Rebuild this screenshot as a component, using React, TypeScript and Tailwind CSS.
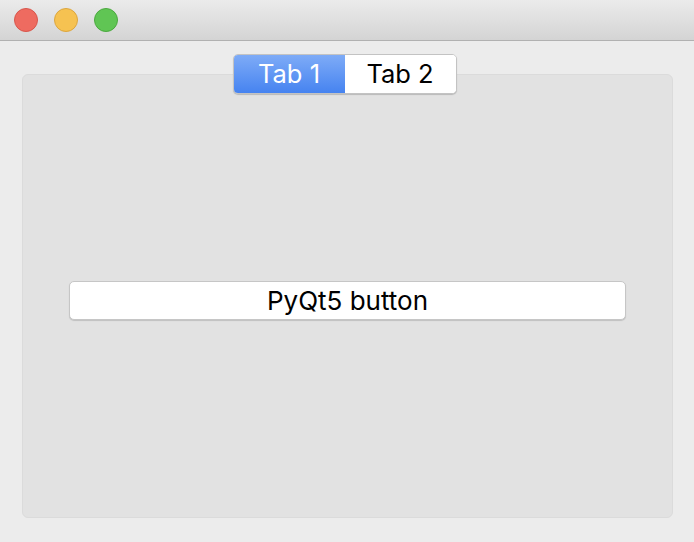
import React, { useState } from 'react'

const TrafficLight: React.FC<{ fill: string }> = ({ fill }) => (
  <span className={`block w-[24px] h-[24px] rounded-full border ${fill}`} />
)

export default function App() {
  const [tab, setTab] = useState(0)

  return (
    <div
      className="w-[694px] h-[542px] flex flex-col bg-[#ececec] overflow-hidden"
      style={{ fontFamily: 'Inter, "Liberation Sans", Arial, sans-serif' }}
    >
      {/* title bar */}
      <div className="h-[41px] shrink-0 flex items-center gap-[16px] pl-[14px] bg-gradient-to-b from-[#ebebeb] to-[#d4d4d4] border-b border-[#b1b1b1]">
        <TrafficLight fill="bg-[#ee6b60] border-[#d8564c]" />
        <TrafficLight fill="bg-[#f6c251] border-[#dca63f]" />
        <TrafficLight fill="bg-[#60c554] border-[#4ba93f]" />
      </div>

      <div className="flex-1 flex flex-col pl-[22px] pr-[21px] pt-[13px] pb-[24px]">
        {/* tabs */}
        <div className="relative z-10 self-center -translate-x-[3px] flex h-[40px] rounded-[5px] border border-[#c3c3c3] shadow-[0_1px_1px_rgba(0,0,0,0.18)] bg-white overflow-hidden">
          {['Tab 1', 'Tab 2'].map((t, i) => (
            <button
              key={t}
              onClick={() => setTab(i)}
              className={`w-[111px] h-full flex items-center justify-center text-[25.5px] leading-none ${
                tab === i
                  ? 'bg-gradient-to-b from-[#7eabf7] to-[#4683f0] text-white'
                  : 'bg-white text-black'
              }`}
            >
              {t}
            </button>
          ))}
        </div>

        {/* panel */}
        <div className="-mt-[20px] flex-1 flex flex-col justify-center pt-[8px] px-[46px] rounded-[6px] bg-[#e2e2e2] border border-[#dbdbdb]">
          {tab === 0 && (
            <button className="h-[39px] w-full rounded-[5px] bg-white border border-[#c6c6c6] shadow-[0_1px_1px_rgba(0,0,0,0.15)] text-[26px] text-black leading-none pt-[1px]">
              PyQt5 button
            </button>
          )}
        </div>
      </div>
    </div>
  )
}
